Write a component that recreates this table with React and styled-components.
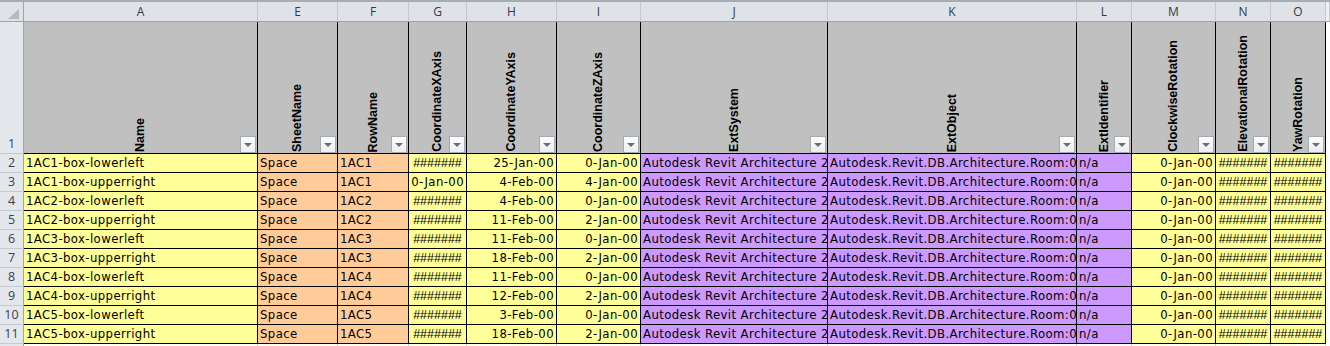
import React from "react";
import styled, { createGlobalStyle } from "styled-components";

const GlobalStyle = createGlobalStyle`
  html, body {
    margin: 0;
    padding: 0;
    background: #ffffff;
    overflow: hidden;
  }
`;

const YELLOW = "#ffff99";
const ORANGE = "#ffcc99";
const PURPLE = "#cc99ff";

const columns = [
    { letter: "A", width: 234, bg: YELLOW, title: "Name", align: "left" },
    { letter: "E", width: 80, bg: ORANGE, title: "SheetName", align: "left" },
    { letter: "F", width: 71, bg: ORANGE, title: "RowName", align: "left" },
    { letter: "G", width: 58, bg: YELLOW, title: "CoordinateXAxis", align: "right" },
    { letter: "H", width: 90, bg: YELLOW, title: "CoordinateYAxis", align: "right" },
    { letter: "I", width: 84, bg: YELLOW, title: "CoordinateZAxis", align: "right" },
    { letter: "J", width: 187, bg: PURPLE, title: "ExtSystem", align: "left" },
    { letter: "K", width: 249, bg: PURPLE, title: "ExtObject", align: "left" },
    { letter: "L", width: 55, bg: PURPLE, title: "ExtIdentifier", align: "left" },
    { letter: "M", width: 84, bg: YELLOW, title: "ClockwiseRotation", align: "right" },
    { letter: "N", width: 55, bg: YELLOW, title: "ElevationalRotation", align: "right" },
    { letter: "O", width: 55, bg: YELLOW, title: "YawRotation", align: "right" },
];

const HASH = "#######";
const SYS = "Autodesk Revit Architecture 2011";
const OBJ = "Autodesk.Revit.DB.Architecture.Room:0";

// name, row, x, y, z
const rows = [
    ["1AC1-box-lowerleft", "1AC1", HASH, "25-Jan-00", "0-Jan-00"],
    ["1AC1-box-upperright", "1AC1", "0-Jan-00", "4-Feb-00", "4-Jan-00"],
    ["1AC2-box-lowerleft", "1AC2", HASH, "4-Feb-00", "0-Jan-00"],
    ["1AC2-box-upperright", "1AC2", HASH, "11-Feb-00", "2-Jan-00"],
    ["1AC3-box-lowerleft", "1AC3", HASH, "11-Feb-00", "0-Jan-00"],
    ["1AC3-box-upperright", "1AC3", HASH, "18-Feb-00", "2-Jan-00"],
    ["1AC4-box-lowerleft", "1AC4", HASH, "11-Feb-00", "0-Jan-00"],
    ["1AC4-box-upperright", "1AC4", HASH, "12-Feb-00", "2-Jan-00"],
    ["1AC5-box-lowerleft", "1AC5", HASH, "3-Feb-00", "0-Jan-00"],
    ["1AC5-box-upperright", "1AC5", HASH, "18-Feb-00", "2-Jan-00"],
];

const Sheet = styled.div`
  display: grid;
  grid-template-columns: 24px ${columns.map((c) => c.width + "px").join(" ")} 1fr;
  grid-template-rows: 20px 132px repeat(11, 19px);
  border-top: 2px solid #a7adb5;
  width: 1330px;
  height: 344px;
  overflow: hidden;
`;

const Corner = styled.div`
  position: relative;
  background: #dfe3e8;
  border-right: 1px solid #9ea5ad;
  border-bottom: 1px solid #9ea5ad;

  &::after {
    content: "";
    position: absolute;
    right: 4px;
    bottom: 2px;
    width: 11px;
    height: 10px;
    background: #b6bac0;
    clip-path: polygon(100% 0, 100% 100%, 0 100%);
  }
`;

const ColLetter = styled.div`
  display: flex;
  align-items: center;
  justify-content: center;
  background: ${(p) => (p.$blank ? "#eef0f3" : "#dfe3e8")};
  border-right: 1px solid #c3c8cf;
  border-bottom: 1px solid #9ea5ad;
  font-family: "Open Sans", "Liberation Sans", sans-serif;
  font-size: 12px;
  color: #333a44;
`;

const RowNum = styled.div`
  display: flex;
  align-items: flex-end;
  justify-content: center;
  background: #e4e8ed;
  border-right: 1px solid #9ea5ad;
  border-bottom: 1px solid #c5cad1;
  font-family: "Open Sans", "Liberation Sans", sans-serif;
  font-size: 12.5px;
  line-height: 18px;
  color: #3a4049;
`;

const HeadCell = styled.div`
  position: relative;
  display: flex;
  align-items: flex-end;
  justify-content: center;
  padding-bottom: 1px;
  background: #c0c0c0;
  border-right: 1px solid #000;
  border-bottom: 1px solid #000;
`;

const HeadLabel = styled.span`
  writing-mode: vertical-rl;
  transform: rotate(180deg);
  font-family: "Liberation Sans", Arial, sans-serif;
  font-weight: bold;
  font-size: 12.5px;
  line-height: 13px;
  white-space: nowrap;
  color: #000;
`;

const FilterButton = styled.div`
  position: absolute;
  right: 1px;
  bottom: 0;
  width: 16px;
  height: 17px;
  box-sizing: border-box;
  border: 1px solid #a5abb2;
  background: linear-gradient(#fbfcfd, #eceef1);
  display: flex;
  align-items: center;
  justify-content: center;

  &::after {
    content: "";
    border-left: 4px solid transparent;
    border-right: 4px solid transparent;
    border-top: 4px solid #6a6e74;
    margin-top: 1px;
  }
`;

const Cell = styled.div`
  box-sizing: border-box;
  padding: 0 2px;
  background: ${(p) => p.$bg};
  border-right: 1px solid ${(p) => (p.$plain ? "#d4d4d4" : "#000")};
  border-bottom: 1px solid ${(p) => (p.$plain ? "#d4d4d4" : "#000")};
  overflow: hidden;
  white-space: nowrap;
  text-align: ${(p) => p.$align};
  font-family: ${(p) =>
        p.$hash
            ? '"Liberation Sans", Arial, sans-serif'
            : '"DejaVu Sans Condensed", "DejaVu Sans", sans-serif'};
  font-size: ${(p) => (p.$hash ? "12.5px" : "13px")};
  letter-spacing: ${(p) => (p.$hash ? "0" : "0.4px")};
  line-height: 18px;
  color: #000;
`;

const Filler = styled.div`
  background: #ffffff;
`;

function valuesFor(r) {
    const [name, rowName, x, y, z] = r;
    return [name, "Space", rowName, x, y, z, SYS, OBJ, "n/a", "0-Jan-00", HASH, HASH];
}

export default function App() {
    return (
        <>
            <GlobalStyle />
            <Sheet>
                <Corner />
                {columns.map((c) => (
                    <ColLetter key={c.letter}>{c.letter}</ColLetter>
                ))}
                <ColLetter $blank />

                <RowNum>1</RowNum>
                {columns.map((c) => (
                    <HeadCell key={c.letter}>
                        <HeadLabel>{c.title}</HeadLabel>
                        <FilterButton />
                    </HeadCell>
                ))}
                <Filler />

                {rows.map((r, i) => (
                    <React.Fragment key={i}>
                        <RowNum>{i + 2}</RowNum>
                        {valuesFor(r).map((v, j) => {
                            const isHash = v === HASH;
                            return (
                                <Cell
                                    key={j}
                                    $bg={columns[j].bg}
                                    $align={isHash ? "center" : columns[j].align}
                                    $hash={isHash}
                                >
                                    {v}
                                </Cell>
                            );
                        })}
                        <Filler />
                    </React.Fragment>
                ))}

                <RowNum>12</RowNum>
                {columns.map((c) => (
                    <Cell key={c.letter} $bg="#ffffff" $align="left" $plain />
                ))}
                <Filler />
            </Sheet>
        </>
    );
}
